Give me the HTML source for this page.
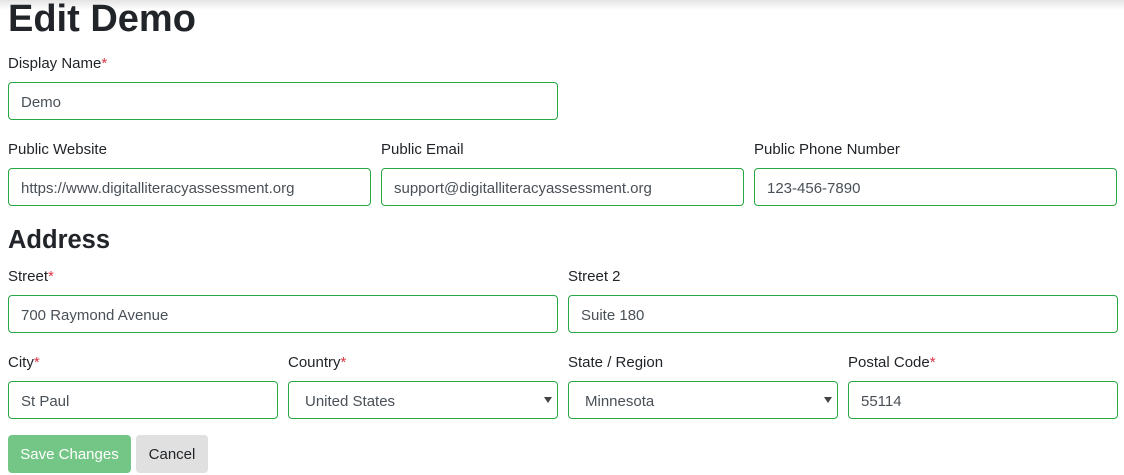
<!DOCTYPE html>
<html><head><style>
body{margin:0;width:1124px;height:459px;overflow:hidden;background:#fff;font-family:"Liberation Sans",sans-serif;color:#212529;position:relative}
.sh{position:absolute;left:0;top:0;width:1124px;height:10px;background:linear-gradient(#e4e4e4,#fff)}
.a{position:absolute;white-space:nowrap}
.l{font-size:15px}
.l i{color:#dc3545;font-style:normal}
.in{position:absolute;box-sizing:border-box;height:38px;border:1px solid #28a745;border-radius:4px;font-size:15px;color:#495057;padding:2px 12px 0;line-height:36px;background:#fff}
.sel:after{content:"";position:absolute;right:5px;top:15px;border:4px solid transparent;border-top:6px solid #444;border-bottom:0}
.sel{padding-left:16px}
</style></head><body>
<div class="sh"></div>
<div class="a" style="left:8px;top:-2px;font-size:38px;font-weight:bold">Edit Demo</div>
<div class="a l" style="left:8px;top:55px">Display Name<i>*</i></div>
<div class="in" style="left:8px;top:82px;width:550px">Demo</div>
<div class="a l" style="left:8px;top:141px">Public Website</div>
<div class="a l" style="left:381px;top:141px">Public Email</div>
<div class="a l" style="left:754px;top:141px">Public Phone Number</div>
<div class="in" style="left:8px;top:168px;width:363px">https://www.digitalliteracyassessment.org</div>
<div class="in" style="left:381px;top:168px;width:363px">support@digitalliteracyassessment.org</div>
<div class="in" style="left:754px;top:168px;width:363px">123-456-7890</div>
<div class="a" style="left:8px;top:226px;font-size:25.5px;font-weight:bold">Address</div>
<div class="a l" style="left:8px;top:268px">Street<i>*</i></div>
<div class="a l" style="left:568px;top:268px">Street 2</div>
<div class="in" style="left:8px;top:295px;width:550px">700 Raymond Avenue</div>
<div class="in" style="left:568px;top:295px;width:550px">Suite 180</div>
<div class="a l" style="left:8px;top:354px">City<i>*</i></div>
<div class="a l" style="left:288px;top:354px">Country<i>*</i></div>
<div class="a l" style="left:568px;top:354px">State / Region</div>
<div class="a l" style="left:848px;top:354px">Postal Code<i>*</i></div>
<div class="in" style="left:8px;top:381px;width:270px">St Paul</div>
<div class="in sel" style="left:288px;top:381px;width:270px">United States</div>
<div class="in sel" style="left:568px;top:381px;width:270px">Minnesota</div>
<div class="in" style="left:848px;top:381px;width:270px">55114</div>
<div class="a" style="left:8px;top:435px;width:123px;height:38px;background:#74c686;border-radius:4px;color:#fff;font-size:15px;text-align:center;line-height:40px">Save Changes</div>
<div class="a" style="left:136px;top:435px;width:72px;height:38px;background:#e0e0e0;border-radius:4px;color:#212529;font-size:15px;text-align:center;line-height:40px">Cancel</div>
</body></html>
